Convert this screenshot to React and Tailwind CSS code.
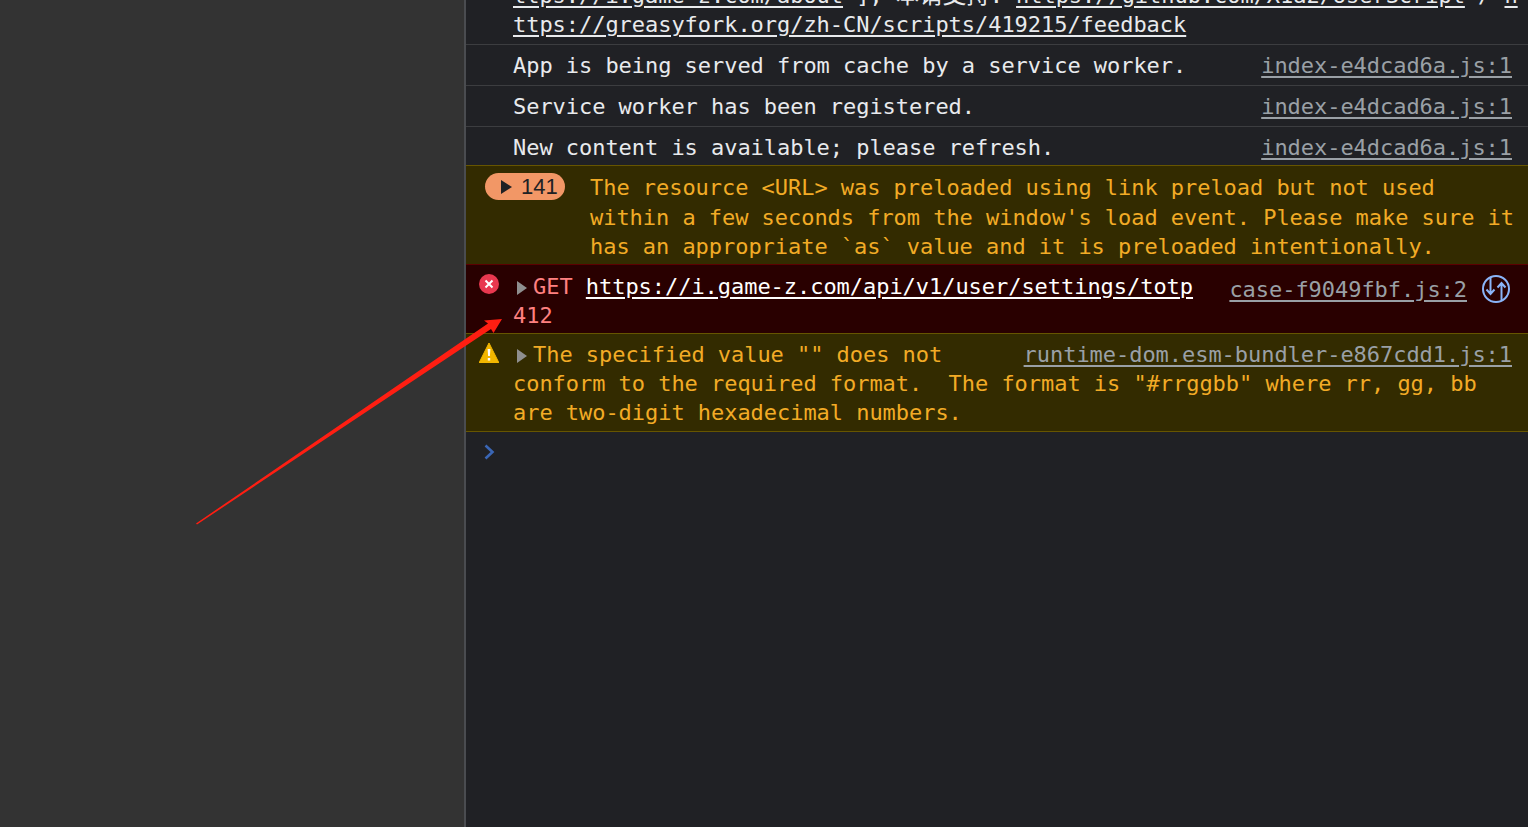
const MONO = "font-['DejaVu_Sans_Mono','Noto_Sans_CJK_SC',monospace]";

const Source = ({ children, className = "" }) => (
  <a className={`float-right text-[#9aa0a6] underline underline-offset-[3px] ${className}`}>{children}</a>
);

const Caret = () => (
  <svg width="10" height="14" viewBox="0 0 10 14" className="inline-block align-[-1px] ml-1 mr-[6px]">
    <path d="M0 0 L10 7 L0 14 Z" fill="#8f8f8f" />
  </svg>
);

const InfoRow = ({ text }) => (
  <div className="pl-[47px] pr-4 pt-1.5 pb-[5px] border-b border-[#3c3d40] text-[#e8eaed]">
    <Source>index-e4dcad6a.js:1</Source>
    {text}
  </div>
);

const ErrorIcon = () => (
  <svg width="20" height="20" viewBox="0 0 20 20" className="mt-[2px]">
    <circle cx="10" cy="10" r="10" fill="#e8384f" />
    <path d="M6.5 6.5 L13.5 13.5 M13.5 6.5 L6.5 13.5" stroke="#fff" strokeWidth="2" />
  </svg>
);

const WarnIcon = () => (
  <svg width="20" height="20" viewBox="0 0 20 20" className="mt-[3px]">
    <path d="M10 0 L20 20 L0 20 Z" fill="#f2b600" stroke="#f2b600" strokeLinejoin="round" />
    <path d="M8.6 6 H11.4 L10.9 13 H9.1 Z M8.8 15 H11.2 V17.4 H8.8 Z" fill="#fff" />
  </svg>
);

const SyncIcon = () => (
  <svg width="30" height="30" viewBox="0 0 30 30" className="absolute right-[17px] top-[9px]">
    <circle cx="15" cy="15" r="13" fill="none" stroke="#8ab4f8" strokeWidth="2" />
    <path d="M9.5 3 V19 M5.5 15.5 L9.5 20 L13.5 15.5" fill="none" stroke="#8ab4f8" strokeWidth="2" />
    <path d="M20.5 27 V10 M16.5 13.5 L20.5 9 L24.5 13.5" fill="none" stroke="#8ab4f8" strokeWidth="2" />
  </svg>
);

const App = () => {
  return (
    <div className={`relative flex h-[827px] w-[1528px] overflow-hidden bg-[#333333] text-[22px] leading-[29.3px] tracking-[-0.045px] ${MONO}`}>
      <div className="w-[464px] shrink-0" />
      <div className="flex-1 border-l-2 border-[#4a4c50] bg-[#202125] overflow-hidden">
        <div className="-mt-[19px] pl-[47px] pr-2 pb-[4px] border-b border-[#3c3d40] text-[#e8eaed] whitespace-nowrap">
          <div>
            <a className="underline underline-offset-[3px]">ttps://i.game-z.com/about</a>
            {" ], "}
            <span className="text-[23.5px]">本请支持</span>
            {": "}
            <a className="underline underline-offset-[3px]">https://github.com/X1a2/UserScript</a>
            {" / "}
            <a className="underline underline-offset-[3px]">h</a>
          </div>
          <a className="underline underline-offset-[3px]">ttps://greasyfork.org/zh-CN/scripts/419215/feedback</a>
        </div>

        <InfoRow text="App is being served from cache by a service worker." />
        <InfoRow text="Service worker has been registered." />
        <div className="pl-[47px] pr-4 pt-1.5 pb-[3px] text-[#e8eaed]">
          <Source>index-e4dcad6a.js:1</Source>
          New content is available; please refresh.
        </div>

        <div className="flex border-t border-[#665500] bg-[#332b00] pt-[7px] pb-[3px] text-[#f2ab26]">
          <div className="ml-[19px] mr-[25px] flex h-[27px] w-[80px] shrink-0 items-center gap-[9px] rounded-full bg-[#f29766] pl-4 font-['Liberation_Sans',sans-serif] text-[22px] font-medium text-[#202124]">
            <svg width="11" height="14" viewBox="0 0 11 14">
              <path d="M0 0 L11 7 L0 14 Z" fill="#202124" />
            </svg>
            141
          </div>
          <div className="whitespace-nowrap">
            The resource &lt;URL&gt; was preloaded using link preload but not used
            <br />
            within a few seconds from the window's load event. Please make sure it
            <br />
            has an appropriate `as` value and it is preloaded intentionally.
          </div>
        </div>

        <div className="relative flex border-t border-[#5c0000] bg-[#290000] pt-[6.5px] pb-[2.9px] text-[#ff8080]">
          <div className="flex w-[47px] shrink-0 justify-center pr-[2px]"><ErrorIcon /></div>
          <div className="flex-1 pr-[61px]">
            <Source className="mt-[3px]">case-f9049fbf.js:2</Source>
            <Caret />
            GET{" "}
            <a className="text-white underline underline-offset-[3px]">https://i.game-z.com/api/v1/user/settings/totp</a>
            <br />
            412
          </div>
          <SyncIcon />
        </div>

        <div className="flex border-y border-[#665500] bg-[#332b00] pt-[5.5px] pb-[3.5px] text-[#f2ab26]">
          <div className="flex w-[47px] shrink-0 justify-center pr-[2px]"><WarnIcon /></div>
          <div className="flex-1 pr-4">
            <Source>runtime-dom.esm-bundler-e867cdd1.js:1</Source>
            <Caret />
            The specified value "" does not
            <br />
            <span className="whitespace-pre">conform to the required format.  The format is "#rrggbb" where rr, gg, bb</span>
            <br />
            are two-digit hexadecimal numbers.
          </div>
        </div>

        <div className="flex pl-[18px] pt-[12px]">
          <svg width="11" height="16" viewBox="0 0 11 16">
            <path d="M1.5 1.5 L8.5 8 L1.5 14.5" fill="none" stroke="#3a66b5" strokeWidth="2.6" />
          </svg>
        </div>
      </div>

      {/* red annotation arrow */}
      <svg width="1528" height="827" viewBox="0 0 1528 827" className="absolute inset-0 pointer-events-none">
        <path d="M196 523.5 L488 323.5 L484 320.5 L502 319 L493.5 333 L491 329 L197 524.5 Z" fill="#ff1e12" />
      </svg>
    </div>
  );
};

export default App;
